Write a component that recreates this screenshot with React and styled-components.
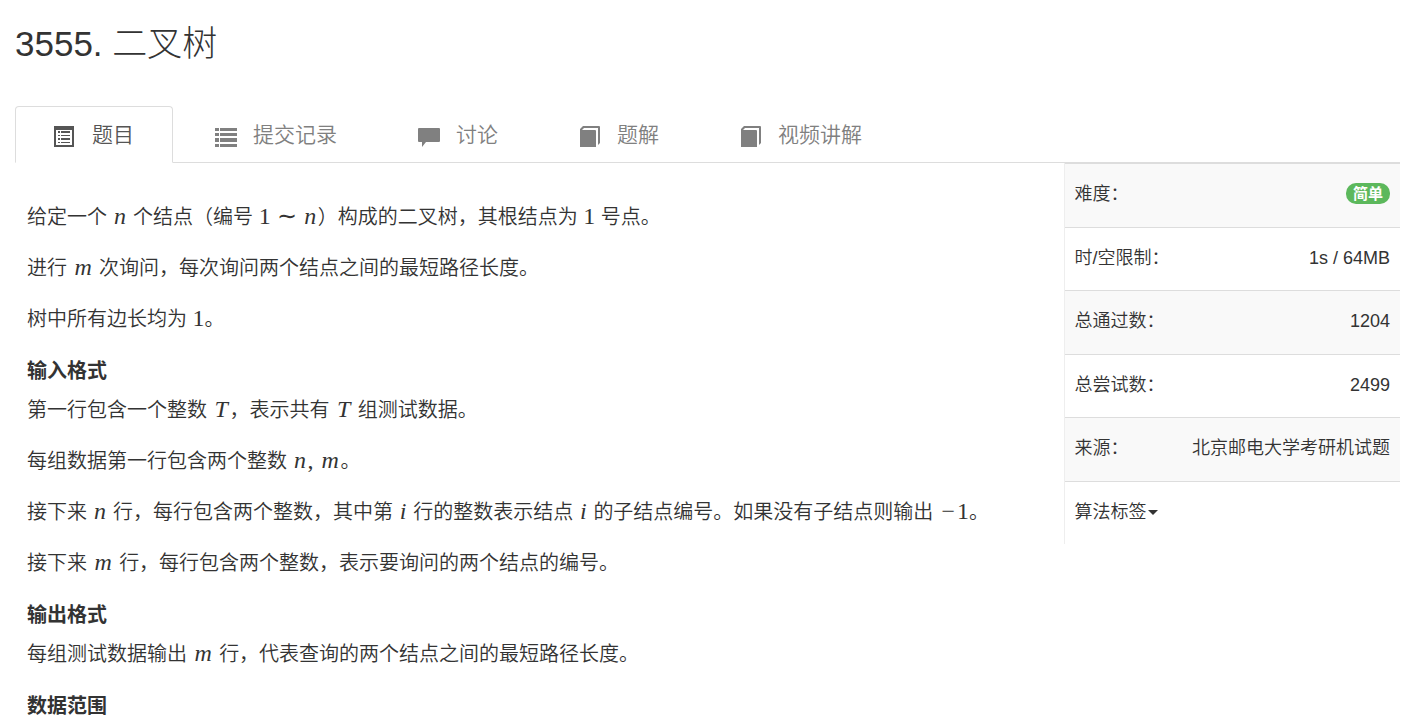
import React from 'react';
import styled, { createGlobalStyle } from 'styled-components';

const GlobalStyle = createGlobalStyle`
  * {
    box-sizing: border-box;
  }

  body {
    margin: 0;
    color: #333;
    background: #fff;
    font-family: 'Liberation Sans', 'Noto Sans CJK SC', sans-serif;
    font-size: 18px;
    font-weight: 350;
  }
`;

const Page = styled.main`
  padding-left: 15px;
`;

const Title = styled.h1`
  margin: 0;
  padding: 24px 0 42px;
  font-size: 35px;
  font-weight: 300;
  line-height: 40px;
`;

const Tabs = styled.nav`
  display: flex;
  gap: 3px;
  margin-right: 13px;
  border-bottom: 1px solid #ddd;
`;

const Tab = styled.a`
  display: flex;
  align-items: center;
  gap: 17px;
  margin-bottom: -1px;
  padding: 13px 38px;
  border: 1px solid;
  border-color: ${({ $active }) => ($active ? '#ddd #ddd #fff' : 'transparent')};
  border-radius: 4px 4px 0 0;
  color: ${({ $active }) => ($active ? '#555' : '#808080')};
  font-size: 21px;
  line-height: 29px;
  text-decoration: none;
`;

const Icon = styled.svg`
  flex: none;
  width: 21px;
  height: 21px;
  margin-top: 4px;
  fill: currentColor;
  overflow: visible;
`;

const Columns = styled.div`
  display: grid;
  grid-template-columns: 3fr 1fr;
  align-items: start;
`;

const Statement = styled.article`
  padding: 39px 12px 0;
  font-size: 20px;
`;

const Paragraph = styled.p`
  margin: 0 0 21px;
  line-height: 30px;
`;

const Heading = styled.h2`
  margin: 26px 0 13px;
  font-size: 20px;
  font-weight: 700;
  line-height: 22px;

  &:last-child {
    margin-bottom: 0;
  }
`;

const widths = { n: 15, m: 21, T: 17, i: 9, '−': 18 };

const Symbol = styled.var`
  display: inline-block;
  min-width: ${({ children }) => widths[children]}px;
  font-family: 'Liberation Serif', serif;
  font-size: 24px;
  font-weight: 400;
  line-height: 24px;
  text-align: center;
`;

const Num = styled.span`
  font-family: 'Liberation Serif', serif;
  font-size: 24px;
  font-weight: 400;
  line-height: 24px;
`;

const Relation = styled(Num)`
  padding: 0 6px;
`;

const Info = styled.table`
  margin-right: 13px;
  border-collapse: separate;
  border-spacing: 0;
  border-left: 1px solid #eee;
`;

const InfoRow = styled.tr`
  & > * {
    padding: 18px 10px 19px;
    border-top: 1px solid #ddd;
    font-weight: 350;
    line-height: 25px;
    text-align: left;
  }

  & > td {
    text-align: right;
  }

  &:nth-child(odd) > * {
    padding-bottom: 20px;
    background: #f9f9f9;
  }

  &:last-child > * {
    padding-bottom: 19px;
    background: #fff;
  }
`;

const Badge = styled.span`
  display: inline-block;
  margin-top: 1px;
  padding: 0 7px;
  border-radius: 10px;
  background: #5cb85c;
  color: #fff;
  font-size: 15px;
  font-weight: 700;
  line-height: 21px;
  vertical-align: top;
`;

const TagButton = styled.button`
  display: flex;
  align-items: center;
  gap: 1px;
  padding: 0;
  border: 0;
  background: none;
  color: inherit;
  font: inherit;
  line-height: 25px;
`;

const Caret = styled.span`
  border-top: 5px solid;
  border-right: 5px solid transparent;
  border-left: 5px solid transparent;
`;

const Book = () => (
  <Icon viewBox="0 0 21 21" aria-hidden="true">
    <path d="M4 0H20q1 0 1 1v16l-2 2V2H5L3 4H16q1 0 1 1V21H1V3z" />
  </Icon>
);

const tabs = [
  {
    label: '题目',
    icon: (
      <Icon viewBox="0 0 21 21" aria-hidden="true">
        <path
          fillRule="evenodd"
          d="M0 0h20v21H0zM2 4v15h16V4zM4 5h2v2H4zm3 0h9v2H7zM4 9h2v1H4zm3 0h9v1H7zm-3 3h2v2H4zm3 0h9v2H7zm-3 4h2v1H4zm3 0h9v1H7z"
        />
      </Icon>
    ),
  },
  {
    label: '提交记录',
    icon: (
      <Icon viewBox="0 0 21 21" aria-hidden="true">
        <path d="M0 2h4v3H0zm5 0h17v3H5zM0 7h4v3H0zm5 0h17v3H5zM0 12h4v4H0zm5 0h17v4H5zM0 18h4v3H0zm5 0h17v3H5z" />
      </Icon>
    ),
  },
  {
    label: '讨论',
    icon: (
      <Icon viewBox="0 0 21 21" aria-hidden="true">
        <path d="M1 2h20q1 0 1 1v12q0 1-1 1H8l-4 5v-5H1q-1 0-1-1V3q0-1 1-1z" />
      </Icon>
    ),
  },
  { label: '题解', icon: <Book /> },
  { label: '视频讲解', icon: <Book /> },
];

const info = [
  ['难度：', <Badge key="level">简单</Badge>],
  ['时/空限制：', '1s / 64MB'],
  ['总通过数：', '1204'],
  ['总尝试数：', '2499'],
  ['来源：', '北京邮电大学考研机试题'],
];

function App() {
  return (
    <>
      <GlobalStyle />
      <Page lang="zh-CN">
        <Title>3555. 二叉树</Title>
        <Tabs>
          {tabs.map(({ label, icon }, index) => (
            <Tab key={label} href="#" $active={index === 0}>
              {icon}
              {label}
            </Tab>
          ))}
        </Tabs>
        <Columns>
          <Statement>
            <Paragraph>
              给定一个 <Symbol>n</Symbol> 个结点（编号 <Num>1</Num>
              <Relation>∼</Relation>
              <Symbol>n</Symbol>）构成的二叉树，其根结点为 <Num>1</Num> 号点。
            </Paragraph>
            <Paragraph>
              进行 <Symbol>m</Symbol> 次询问，每次询问两个结点之间的最短路径长度。
            </Paragraph>
            <Paragraph>
              树中所有边长均为 <Num>1</Num>。
            </Paragraph>
            <Heading>输入格式</Heading>
            <Paragraph>
              第一行包含一个整数 <Symbol>T</Symbol>，表示共有 <Symbol>T</Symbol>{' '}
              组测试数据。
            </Paragraph>
            <Paragraph>
              每组数据第一行包含两个整数 <Symbol>n</Symbol>
              <Num>, </Num>
              <Symbol>m</Symbol>。
            </Paragraph>
            <Paragraph>
              接下来 <Symbol>n</Symbol> 行，每行包含两个整数，其中第{' '}
              <Symbol>i</Symbol> 行的整数表示结点 <Symbol>i</Symbol>{' '}
              的子结点编号。如果没有子结点则输出 <Symbol>−</Symbol>
              <Num>1</Num>。
            </Paragraph>
            <Paragraph>
              接下来 <Symbol>m</Symbol>{' '}
              行，每行包含两个整数，表示要询问的两个结点的编号。
            </Paragraph>
            <Heading>输出格式</Heading>
            <Paragraph>
              每组测试数据输出 <Symbol>m</Symbol>{' '}
              行，代表查询的两个结点之间的最短路径长度。
            </Paragraph>
            <Heading>数据范围</Heading>
          </Statement>
          <Info>
            <tbody>
              {info.map(([label, value]) => (
                <InfoRow key={label}>
                  <th scope="row">{label}</th>
                  <td>{value}</td>
                </InfoRow>
              ))}
              <InfoRow>
                <th colSpan={2}>
                  <TagButton type="button">
                    算法标签
                    <Caret />
                  </TagButton>
                </th>
              </InfoRow>
            </tbody>
          </Info>
        </Columns>
      </Page>
    </>
  );
}

export default App;
